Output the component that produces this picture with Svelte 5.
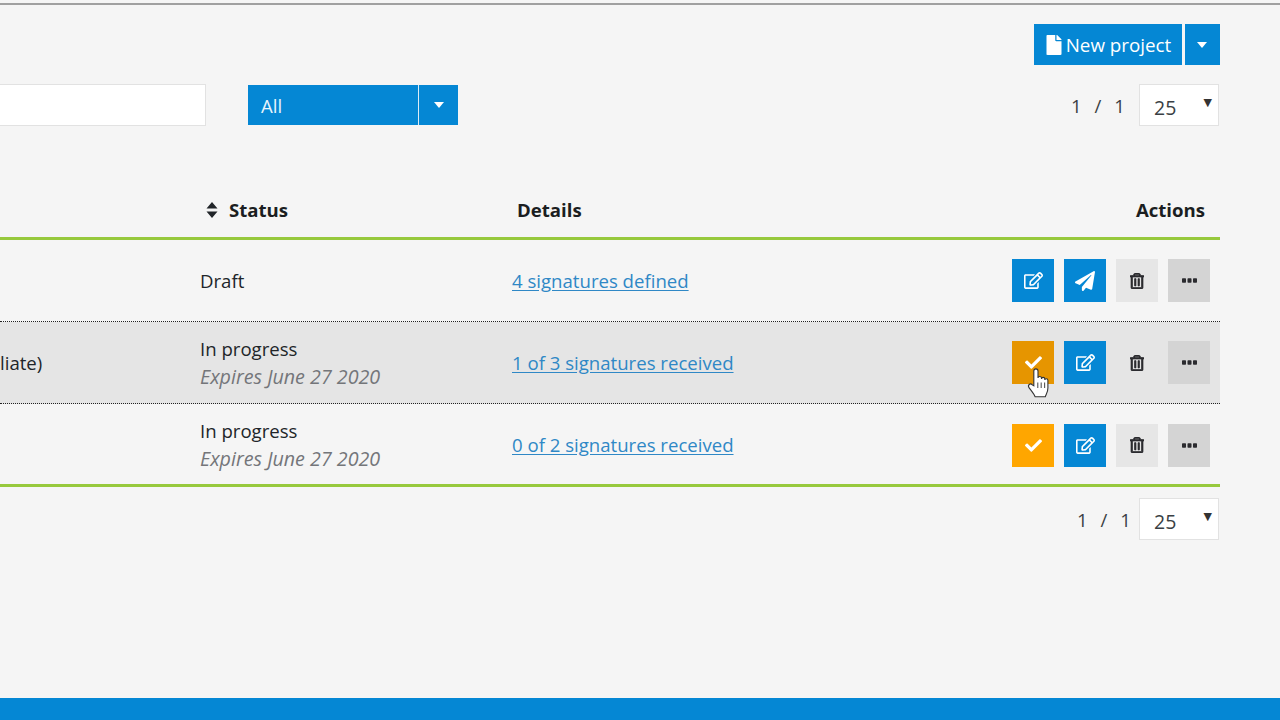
<script>
const edit = "M402.3 344.9l32-32c5-5 13.7-1.5 13.7 5.7V464c0 26.5-21.5 48-48 48H48c-26.5 0-48-21.5-48-48V112c0-26.5 21.5-48 48-48h273.5c7.1 0 10.7 8.6 5.7 13.7l-32 32c-1.5 1.5-3.5 2.3-5.7 2.3H48v352h352V350.5c0-2.1.8-4.1 2.3-5.6zm156.6-201.8L296.3 405.7l-90.4 10c-26.2 2.9-48.5-19.2-45.6-45.6l10-90.4L432.9 17.1c22.9-22.9 59.9-22.9 82.7 0l43.2 43.2c22.9 22.9 22.9 60 .1 82.8zM460.1 174L402 115.9 216.2 301.8l-7.3 65.3 65.3-7.3L460.1 174zm64.8-79.7l-43.2-43.2c-4.1-4.1-10.8-4.1-14.8 0L436 82l58.1 58.1 30.9-30.9c4-4.2 4-10.8-.1-14.9z";
const plane = "M476 3.2L12.5 270.6c-18.1 10.4-15.8 35.6 2.2 43.2L121 358.4l287.3-253.2c5.5-4.9 13.3 2.6 8.6 8.3L176 407v80.5c0 23.6 28.5 32.9 42.5 15.8L282 426l124.6 52.2c14.2 6 30.4-2.9 33-18.2l72-432C515 7.8 493.3-6.8 476 3.2z";
const check = "M173.898 439.404l-166.4-166.4c-9.997-9.997-9.997-26.206 0-36.204l36.203-36.204c9.997-9.998 26.207-9.998 36.204 0L192 312.69 432.095 72.596c9.997-9.997 26.207-9.997 36.204 0l36.203 36.204c9.997 9.997 9.997 26.206 0 36.204l-294.4 294.401c-9.998 9.997-26.207 9.997-36.204-.001z";
const trash = "M268 416h24a12 12 0 0 0 12-12V188a12 12 0 0 0-12-12h-24a12 12 0 0 0-12 12v216a12 12 0 0 0 12 12zM432 80h-82.41l-34-56.7A48 48 0 0 0 274.41 0H173.59a48 48 0 0 0-41.16 23.3L98.41 80H16A16 16 0 0 0 0 96v16a16 16 0 0 0 16 16h16v336a48 48 0 0 0 48 48h288a48 48 0 0 0 48-48V128h16a16 16 0 0 0 16-16V96a16 16 0 0 0-16-16zM171.84 50.91A6 6 0 0 1 177 48h94a6 6 0 0 1 5.15 2.91L293.61 80H154.39zM368 464H80V128h288zm-212-48h24a12 12 0 0 0 12-12V188a12 12 0 0 0-12-12h-24a12 12 0 0 0-12 12v216a12 12 0 0 0 12 12z";

const rows = [
  { name: "", status: "Draft", expires: "", link: "4 signatures defined", first: "edit", second: "plane", hover: false },
  { name: "liate)", status: "In progress", expires: "Expires June 27 2020", link: "1 of 3 signatures received", first: "check", second: "edit", hover: true },
  { name: "", status: "In progress", expires: "Expires June 27 2020", link: "0 of 2 signatures received", first: "check", second: "edit", hover: false }
];
</script>

{#snippet icon(kind)}
  {#if kind === "edit"}
    <svg class="ic-edit" viewBox="0 0 576 512"><path d={edit} /></svg>
  {:else if kind === "plane"}
    <svg class="ic-plane" viewBox="0 0 512 512"><path d={plane} /></svg>
  {:else}
    <svg class="ic-check" viewBox="0 0 512 512"><path d={check} /></svg>
  {/if}
{/snippet}

<div class="page">
  <div class="topline"></div>
  <main>
    <div class="new-row">
      <button class="blue new">
        <svg class="ic-file" viewBox="0 0 384 512"><path d="M224 136V0H24C10.7 0 0 10.7 0 24v464c0 13.3 10.7 24 24 24h336c13.3 0 24-10.7 24-24V160H248c-13.2 0-24-10.8-24-24zm160-14.1v6.1H256V0h6.1c6.4 0 12.5 2.5 17 7l97.9 98c4.5 4.5 7 10.6 7 16.9z" /></svg>
        New project
      </button>
      <button class="blue caret-btn"><span class="caret"></span></button>
    </div>

    <div class="filter-row">
      <div class="search"></div>
      <div class="filter">
        <span class="filter-label">All</span>
        <span class="filter-caret"><span class="caret"></span></span>
      </div>
      <div class="pager top">
        <span class="pages">1<i>/</i>1</span>
        <div class="size">25<span class="arrow">▼</span></div>
      </div>
    </div>

    <div class="head">
      <div class="c-name"></div>
      <div class="c-status th">
        <svg class="ic-sort" viewBox="0 0 12 16"><path d="M6 0l5.5 6.6H.5zM6 16L.5 9.4h11z" /></svg>
        Status
      </div>
      <div class="c-details th det">Details</div>
      <div class="c-actions th">Actions</div>
    </div>

    <div class="body">
      {#each rows as row}
        <div class="row" class:hover={row.hover}>
          <div class="c-name name">{row.name}</div>
          <div class="c-status">
            <div>{row.status}</div>
            {#if row.expires}<div class="expires">{row.expires}</div>{/if}
          </div>
          <div class="c-details"><a href="#top">{row.link}</a></div>
          <div class="c-actions btns">
            <button class="act" class:blue={row.first === "edit"} class:orange={row.first === "check"} class:pressed={row.hover}>
              {@render icon(row.first)}
            </button>
            <button class="act blue">{@render icon(row.second)}</button>
            <button class="act light">
              <svg class="ic-trash" viewBox="0 0 448 512"><path d={trash} /></svg>
            </button>
            <button class="act grey">
              <svg class="ic-dots" viewBox="0 0 15 5"><rect width="4" height="4.4" y=".3" rx=".7" /><rect x="5.5" width="4" height="4.4" y=".3" rx=".7" /><rect x="11" width="4" height="4.4" y=".3" rx=".7" /></svg>
            </button>
            {#if row.hover}
              <svg class="hand" viewBox="0 0 20 28">
                <path d="M6.2 17V3.6C6.2 1 10 1 10 3.6V10c0-2 3.2-2 3.2 0v.8c0-1.9 3-1.9 3 0v1c0-1.7 2.8-1.7 2.8.2V19c0 4-1.6 5.6-2.4 8H7.4C6.6 24.600 4.200 22 1.800 18.600c-1.500-2.200 1.200-4.400 3-2.500z" />
                <path class="lines" d="M9.800 14v5M12.900 14v5M16 14v5" />
              </svg>
            {/if}
          </div>
        </div>
      {/each}
    </div>

    <div class="pager bottom">
      <span class="pages">1<i>/</i>1</span>
      <div class="size">25<span class="arrow">▼</span></div>
    </div>
  </main>
  <footer></footer>
</div>

<style>
:global(body) {
  margin: 0;
}

.page {
  width: 1280px;
  height: 720px;
  overflow: hidden;
  display: flex;
  flex-direction: column;
  background: #f5f5f5;
  color: #212529;
  font-family: "Open Sans", sans-serif;
  font-size: 18.6px;
}

.topline {
  height: 2px;
  margin-top: 3px;
  background: #a0a0a0;
}

main {
  flex: 1;
  padding: 19px 60px 0 0;
}

footer {
  height: 22px;
  background: #0587d4;
}

button {
  border: 0;
  padding: 0;
  font: inherit;
  color: #fff;
  display: flex;
  align-items: center;
  justify-content: center;
}

.blue {
  background: #0587d4;
}

.new-row {
  display: flex;
  justify-content: flex-end;
  gap: 3px;
  height: 41px;
}

.new {
  width: 148px;
  gap: 3px;
  font-size: 18.8px;
}

.caret-btn {
  width: 35px;
  padding-right: 2px;
}

.caret {
  display: block;
  width: 0;
  height: 0;
  border-left: 5.5px solid transparent;
  border-right: 5.5px solid transparent;
  border-top: 6px solid #fff;
}

.ic-file {
  width: 18px;
  height: 20px;
  fill: #fff;
}

.filter-row {
  display: flex;
  align-items: flex-start;
  margin-top: 19px;
  height: 42px;
}

.search {
  width: 205px;
  height: 40px;
  background: #fff;
  border: 1px solid #e2e2e2;
  border-left: 0;
}

.filter {
  display: flex;
  margin: 1px 0 0 42px;
  width: 210px;
  height: 40px;
  background: #0587d4;
  color: #e8f4fc;
}

.filter-label {
  flex: 1;
  padding-left: 13px;
  line-height: 41px;
}

.filter-caret {
  width: 39px;
  border-left: 1px solid #dcecf6;
  display: flex;
  align-items: center;
  justify-content: center;
}

.pager {
  display: flex;
  align-items: flex-start;
  color: #3a3f44;
  margin-right: 1px;
}

.pager.top {
  margin-left: auto;
  gap: 14px;
}

.pager.bottom {
  justify-content: flex-end;
  gap: 8px;
  margin-top: 11px;
}

.pages {
  line-height: 43px;
  font-size: 18.6px;
  display: flex;
  width: 54px;
  justify-content: space-between;
}

.pages i {
  font-style: normal;
}

.size {
  position: relative;
  box-sizing: border-box;
  width: 80px;
  height: 42px;
  padding-left: 14px;
  line-height: 46px;
  background: #fff;
  border: 1px solid #e2e2e2;
  font-size: 19.5px;
}

.arrow {
  position: absolute;
  right: 6px;
  top: 10px;
  font-size: 11px;
  line-height: 16px;
  color: #333;
  font-family: "DejaVu Sans", sans-serif;
}

.head {
  display: flex;
  align-items: center;
  height: 39px;
  padding-bottom: 8px;
  margin-top: 64px;
  border-bottom: 3px solid #97c93d;
}

.th {
  font-weight: 700;
  color: #1b1e21;
}

.c-name {
  width: 200px;
  flex: none;
}

.c-status {
  width: 312px;
  flex: none;
}

.head .c-status {
  display: flex;
  align-items: center;
  box-sizing: border-box;
  padding-left: 6px;
  gap: 11px;
}

.c-details {
  flex: 1;
}

.det {
  padding-left: 5px;
}

.c-actions {
  padding-right: 10px;
  position: relative;
}

.head .c-actions {
  padding-right: 15px;
}

.ic-sort {
  width: 12px;
  height: 16px;
  fill: #212529;
}

.row {
  display: flex;
  align-items: center;
  height: 81px;
  border-bottom: 1px dotted #222;
  line-height: 28px;
}

.row:last-child {
  height: 78px;
  padding-top: 2px;
  border-bottom: 3px solid #97c93d;
}

.row.hover {
  background: #e5e5e5;
}

.expires {
  font-style: italic;
  font-size: 19.7px;
  color: #74767a;
}

.name {
  white-space: nowrap;
  box-sizing: border-box;
  padding-right: 160px;
  text-align: right;
}

a {
  color: #2f88c6;
  text-decoration: underline;
  text-underline-offset: 2px;
}

.btns {
  display: flex;
  gap: 10px;
}

.act {
  width: 42px;
  height: 43px;
}

.orange {
  background: #ffa600;
}

.orange.pressed {
  background: #e69500;
}

.light {
  background: #e6e6e6;
  color: #2b2b2f;
}

.hover .light {
  background: transparent;
}

.grey {
  background: #d4d4d4;
}

svg path {
  fill: inherit;
}

.ic-edit {
  width: 19px;
  height: 17px;
  fill: #fff;
}

.ic-plane {
  width: 20px;
  height: 20px;
  fill: #fff;
}

.ic-check {
  width: 17px;
  height: 17px;
  fill: #fff;
}

.ic-trash {
  width: 14px;
  height: 16px;
  fill: #2b2b2f;
  stroke: #2b2b2f;
  stroke-width: 22;
}

.ic-dots {
  width: 15px;
  height: 5px;
  fill: #2b2b2f;
}

.hand {
  position: absolute;
  left: 15px;
  top: 26px;
  width: 22px;
  height: 31px;
  fill: #fff;
  stroke: #333;
  stroke-width: 1;
}

.hand .lines {
  fill: none;
  stroke: #555;
}
</style>
